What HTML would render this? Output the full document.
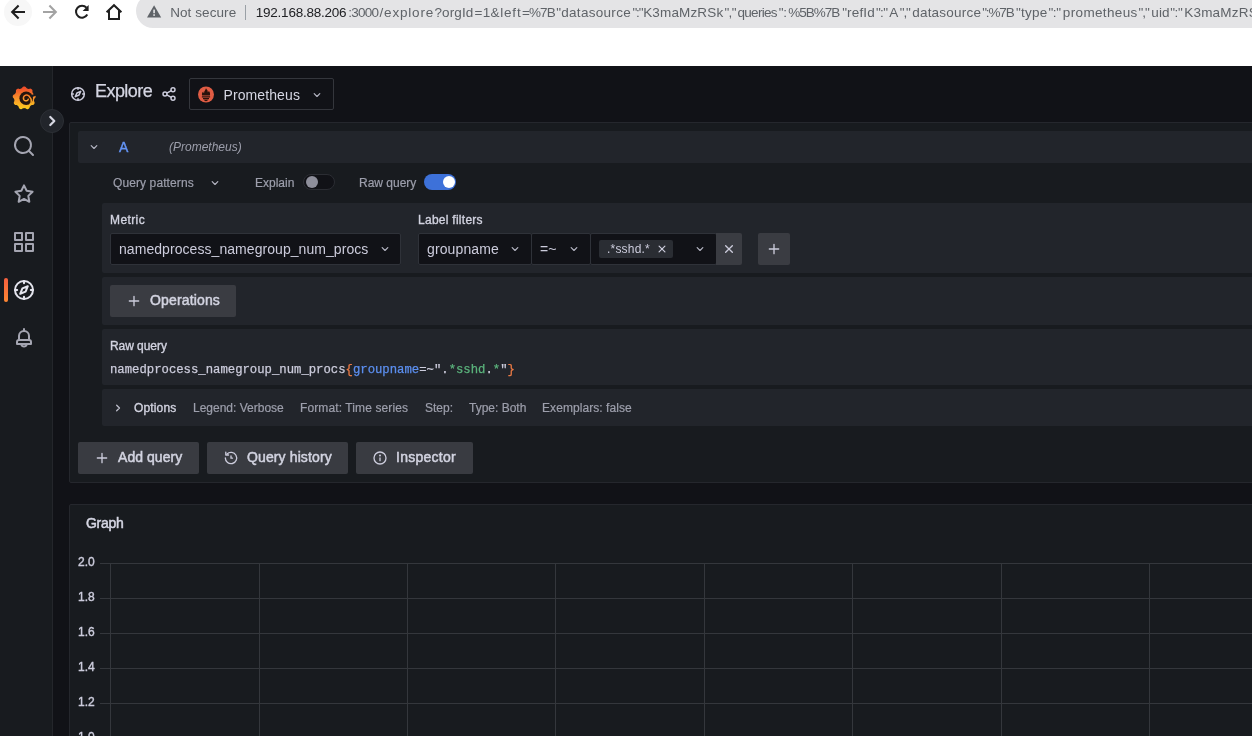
<!DOCTYPE html>
<html lang="en">
<head>
<meta charset="utf-8">
<title>Explore - Grafana</title>
<style>
*{box-sizing:border-box}
html,body{margin:0;padding:0}
body{width:1252px;height:736px;overflow:hidden;background:#fff;position:relative;font-family:"Liberation Sans",sans-serif;color:#ccccdc;font-size:14px}
.abs{position:absolute}
.t{position:absolute;white-space:nowrap;line-height:1}
svg{position:absolute;display:block;overflow:visible}
/* browser chrome */
#pill{left:136px;top:-6px;width:1140px;height:34px;background:#e4e4e6;border-radius:17px}
.url{font-size:13.5px;top:5.5px;color:#5f6368}
/* grafana */
#app{left:0;top:66px;width:1252px;height:670px;background:#111217}
#nav{left:0;top:66px;width:53px;height:670px;background:#181b1f;border-right:1px solid #24262b}
.panel{background:#181b1f;border:1px solid #25272d;border-radius:2px}
.sec{background:#22252b;border-radius:2px}
.inp{background:#111217;border:1px solid #2f3239;border-radius:2px}
.btn{background:#393b41;border-radius:2px}
.lbl{font-size:12px;color:#d2d3e0;-webkit-text-stroke:.35px #d2d3e0}
.sm{font-size:12px;color:#9d9fac;-webkit-text-stroke:.2px #9d9fac}
.bt{font-size:14px;color:#d2d3e0;-webkit-text-stroke:.5px #d2d3e0}
.ax{font-size:12px;color:#ccccdc;-webkit-text-stroke:.4px #ccccdc}
.code{font-family:"Liberation Mono",monospace;font-size:12.28px;color:#ccccdc;-webkit-text-stroke:.25px}
</style>
</head>
<body>
<div id="root" style="position:absolute;left:0;top:0;width:1252px;height:736px;will-change:transform;transform:translateZ(0)">
<!-- ============ browser chrome ============ -->
<div class="abs" id="pill"></div>
<div id="chrome-icons">
<div class="abs" style="left:4px;top:-2px;width:28px;height:28px;border-radius:14px;background:#f7f7f7"></div>
<!-- back -->
<svg style="left:10px;top:4px" width="16" height="16" viewBox="0 0 16 16" fill="none" stroke="#1f1f1f" stroke-width="2.100" stroke-linecap="butt" stroke-linejoin="miter"><path d="M15 8H2.6M8.6 1.6L2.2 8l6.4 6.4"/></svg>
<!-- forward -->
<svg style="left:42px;top:4px" width="16" height="16" viewBox="0 0 16 16" fill="none" stroke="#a3a3a3" stroke-width="2.100"><path d="M1 8h12.4M7.4 1.6L13.8 8l-6.400 6.400"/></svg>
<!-- reload -->
<svg style="left:74px;top:4px" width="16" height="16" viewBox="0 0 16 16" fill="none" stroke="#1f1f1f" stroke-width="2"><path d="M13.300 10.600A6 6 0 1 1 12.500 3.700"/><path d="M14.600 1v6h-6z" fill="#1f1f1f" stroke="none"/></svg>
<!-- home -->
<svg style="left:105px;top:3px" width="18" height="18" viewBox="0 0 18 18" fill="none" stroke="#1f1f1f" stroke-width="2" stroke-linejoin="miter"><path d="M1.600 9.300L9 2.200l7.400 7.100M4 7.600V16h10V7.600"/></svg>
<!-- warning -->
<svg style="left:147px;top:5.300px" width="14.200" height="12.600" viewBox="0 0 14 12"><path d="M7 0L14 12H0z" fill="#5f6368"/><rect x="6.200" y="4.300" width="1.600" height="3.600" fill="#e4e4e6"/><rect x="6.200" y="8.900" width="1.600" height="1.600" fill="#e4e4e6"/></svg>
<div class="abs" style="left:245px;top:5px;width:1px;height:15px;background:#9aa0a6"></div>
</div>
<div id="urltext">
<span class="t url" style="left:170.2px;letter-spacing:0.08px">Not secure</span>
<span class="t url" style="left:255.8px;letter-spacing:-0.24px;color:#202124">192.168.88.206</span>
<span class="t url" style="left:348.2px;letter-spacing:-0.76px">:3000</span>
<span class="t url" style="left:379.5px;letter-spacing:0.82px">/explore</span>
<span class="t url" style="left:434.5px;letter-spacing:0.09px">?orgId</span>
<span class="t url" style="left:474.5px;letter-spacing:0.30px">=1&amp;</span>
<span class="t url" style="left:500.2px;letter-spacing:0.83px">left</span>
<span class="t url" style="left:522.0px;letter-spacing:-0.89px">=%7B</span>
<span class="t url" style="left:556.2px;letter-spacing:0.29px">"datasource</span>
<span class="t url" style="left:632.5px;letter-spacing:-1.20px">":"</span>
<span class="t url" style="left:643.2px;letter-spacing:0.15px">K3maMzRSk</span>
<span class="t url" style="left:724.5px;letter-spacing:-0.67px">","</span>
<span class="t url" style="left:737.5px;letter-spacing:-0.71px">queries</span>
<span class="t url" style="left:778.8px;letter-spacing:-0.30px">":</span>
<span class="t url" style="left:788.2px;letter-spacing:-1.01px">%5B%7B</span>
<span class="t url" style="left:842.2px;letter-spacing:0.14px">"refId</span>
<span class="t url" style="left:876.0px;letter-spacing:-0.67px">":"</span>
<span class="t url" style="left:889.2px">A</span>
<span class="t url" style="left:899.8px;letter-spacing:-1.20px">","</span>
<span class="t url" style="left:912.2px;letter-spacing:0.22px">datasource</span>
<span class="t url" style="left:982.2px;letter-spacing:-1.20px">":</span>
<span class="t url" style="left:988.5px;letter-spacing:-1.14px">%7B</span>
<span class="t url" style="left:1016.0px;letter-spacing:0.23px">"type</span>
<span class="t url" style="left:1048.5px;letter-spacing:-0.42px">":"</span>
<span class="t url" style="left:1062.8px;letter-spacing:0.36px">prometheus</span>
<span class="t url" style="left:1138.5px;letter-spacing:-0.97px">","</span>
<span class="t url" style="left:1151.2px;letter-spacing:0.19px">uid</span>
<span class="t url" style="left:1170.3px;letter-spacing:-0.47px">":"</span>
<span class="t url" style="left:1184.2px;letter-spacing:0.22px">K3maMzRSk"</span>
</div>

<!-- ============ grafana app ============ -->
<div class="abs" id="app"></div>
<div class="abs" id="nav"></div>
<div id="navicons">
<!-- grafana logo -->
<svg style="left:12px;top:86px" width="24" height="24" viewBox="0 0 24 24">
<defs><linearGradient id="gl" gradientUnits="userSpaceOnUse" x1="0" y1="24" x2="0" y2="0"><stop offset="0" stop-color="#fbd21c"/><stop offset=".45" stop-color="#f8982a"/><stop offset=".9" stop-color="#ef4f2a"/></linearGradient></defs>
<path fill="url(#gl)" d="M12.20 0.50 L12.70 0.55 L13.20 0.69 L13.67 0.95 L14.08 1.46 L14.44 1.99 L14.83 2.30 L15.22 2.53 L15.62 2.70 L16.04 2.83 L16.49 2.90 L16.98 2.92 L17.60 2.75 L18.24 2.61 L18.77 2.72 L19.24 2.93 L19.66 3.21 L20.01 3.57 L20.30 4.00 L20.49 4.50 L20.47 5.16 L20.41 5.80 L20.51 6.28 L20.67 6.71 L20.86 7.10 L21.10 7.47 L21.40 7.81 L21.76 8.14 L22.35 8.41 L22.93 8.72 L23.26 9.14 L23.49 9.60 L23.62 10.09 L23.66 10.59 L23.61 11.10 L23.44 11.61 L23.00 12.10 L22.54 12.55 L22.31 12.98 L22.15 13.41 L22.05 13.84 L22.00 14.27 L22.00 14.73 L22.07 15.21 L22.35 15.79 L22.59 16.41 L22.58 16.94 L22.46 17.44 L22.25 17.90 L21.95 18.31 L21.58 18.67 L21.12 18.95 L20.47 19.04 L19.83 19.09 L19.38 19.28 L18.98 19.50 L18.63 19.76 L18.31 20.06 L18.02 20.41 L17.76 20.83 L17.60 21.45 L17.39 22.08 L17.04 22.48 L16.62 22.78 L16.17 23.00 L15.68 23.13 L15.16 23.16 L14.63 23.08 L14.08 22.74 L13.55 22.36 L13.08 22.21 L12.64 22.13 L12.20 22.10 L11.76 22.13 L11.32 22.21 L10.85 22.36 L10.32 22.74 L9.77 23.08 L9.24 23.16 L8.72 23.13 L8.23 23.00 L7.78 22.78 L7.36 22.48 L7.01 22.08 L6.80 21.45 L6.64 20.83 L6.38 20.41 L6.09 20.06 L5.77 19.76 L5.42 19.50 L5.02 19.28 L4.57 19.09 L3.93 19.04 L3.28 18.95 L2.82 18.67 L2.45 18.31 L2.15 17.90 L1.94 17.44 L1.82 16.94 L1.81 16.41 L2.05 15.79 L2.33 15.21 L2.40 14.73 L2.40 14.27 L2.35 13.84 L2.25 13.41 L2.09 12.98 L1.86 12.55 L1.40 12.10 L0.96 11.61 L0.79 11.10 L0.74 10.59 L0.78 10.09 L0.91 9.60 L1.14 9.14 L1.47 8.72 L2.05 8.41 L2.64 8.14 L3.00 7.81 L3.30 7.47 L3.54 7.10 L3.73 6.71 L3.89 6.28 L3.99 5.80 L3.93 5.16 L3.91 4.50 L4.10 4.00 L4.39 3.57 L4.74 3.21 L5.16 2.93 L5.63 2.72 L6.16 2.61 L6.80 2.75 L7.42 2.92 L7.91 2.90 L8.36 2.83 L8.78 2.70 L9.18 2.53 L9.57 2.30 L9.96 1.99 L10.32 1.46 L10.73 0.95 L11.20 0.69 L11.70 0.55Z"/>
<circle cx="14.200" cy="12.300" r="6.800" fill="#24150e"/>
<path d="M18.500 10.600L24 8.400" stroke="#181b1f" stroke-width="2.200" fill="none"/>
<path d="M18.20 17.97 L18.44 17.60 L18.64 17.22 L18.82 16.84 L18.96 16.45 L19.08 16.07 L19.17 15.68 L19.22 15.30 L19.25 14.92 L19.26 14.56 L19.23 14.20 L19.19 13.85 L19.11 13.51 L19.02 13.19 L18.90 12.88 L18.77 12.60 L18.62 12.32 L18.45 12.07 L18.27 11.84 L18.08 11.63 L17.87 11.44 L17.87 11.44 L17.72 11.06 L17.52 10.70 L17.28 10.37 L17.01 10.08 L16.71 9.81 L16.39 9.58 L16.05 9.40 L15.69 9.25 L15.32 9.14 L14.94 9.08 L14.57 9.06 L14.20 9.09 L13.83 9.15 L13.48 9.25 L13.15 9.39 L12.83 9.57 L12.54 9.78 L12.28 10.01 L12.05 10.28 L11.86 10.56 L11.69 10.86 L11.57 11.17 L11.48 11.49 L11.43 11.82 L11.41 12.15 L11.43 12.47 L11.49 12.78 L11.58 13.09 L11.71 13.38 L11.86 13.64 L12.04 13.89 L12.24 14.11 L12.47 14.31 L12.71 14.48 L12.97 14.61 L13.24 14.72 L13.51 14.79 L13.79 14.83 L14.07 14.84 L14.34 14.82 L14.61 14.77 L14.86 14.69 L15.10 14.58 L15.33 14.45 L15.53 14.30 L15.71 14.12 L15.87 13.93 L16.01 13.73 L16.12 13.51 L16.20 13.29" fill="none" stroke="url(#gl)" stroke-width="1.500" stroke-linecap="round" stroke-linejoin="round"/>
</svg>
<!-- toggle -->
<div class="abs" style="left:40px;top:109px;width:24px;height:24px;border-radius:12px;background:#22252b;border:1px solid #2c2f35"></div>
<svg style="left:40px;top:109px" width="24" height="24" viewBox="0 0 24 24" fill="none" stroke="#d8d9e4" stroke-width="2.200" stroke-linecap="round" stroke-linejoin="round"><path d="M10.300 8l4 4-4 4"/></svg>
<!-- search -->
<svg style="left:12px;top:134px" width="24" height="24" viewBox="0 0 24 24" fill="#a4a5b1"><path d="M21.710,20.290,18,16.610A9,9,0,1,0,16.610,18l3.680,3.680a1,1,0,0,0,1.420,0A1,1,0,0,0,21.710,20.290ZM11,18a7,7,0,1,1,7-7A7,7,0,0,1,11,18Z"/></svg>
<!-- star -->
<svg style="left:12px;top:182px" width="24" height="24" viewBox="0 0 24 24" fill="none" stroke="#a4a5b1" stroke-width="2" stroke-linejoin="round"><path d="M12 3.400l2.650 5.400 5.950 .860-4.300 4.200 1.020 5.920L12 16.980 6.680 19.780l1.020-5.920-4.300-4.200 5.950-.860z"/></svg>
<!-- apps -->
<svg style="left:12px;top:230px" width="24" height="24" viewBox="0 0 24 24" fill="none" stroke="#a4a5b1" stroke-width="2" stroke-linejoin="round"><rect x="3" y="3" width="7" height="7"/><rect x="14" y="3" width="7" height="7"/><rect x="3" y="14" width="7" height="7"/><rect x="14" y="14" width="7" height="7"/></svg>
<!-- compass active -->
<div class="abs" style="left:4px;top:278px;width:4px;height:24px;border-radius:2px;background:linear-gradient(#f55f3e,#ff8833)"></div>
<svg style="left:12px;top:278px" width="24" height="24" viewBox="0 0 24 24" fill="none" stroke="#e4e5ee" stroke-width="2" stroke-linecap="round" stroke-linejoin="round"><circle cx="12" cy="12" r="9"/><path d="M12 3v2.200M12 18.800V21M3 12h2.200M18.800 12H21"/><path d="M15.800 8.200l-2.200 5.400-5.400 2.200 2.200-5.400z"/></svg>
<!-- bell -->
<svg style="left:12px;top:326px" width="24" height="24" viewBox="0 0 24 24" fill="none" stroke="#a4a5b1" stroke-width="2" stroke-linecap="round" stroke-linejoin="round"><path d="M7 14V10a5 5 0 0 1 10 0v4M12 5V3M7 14h10a2 2 0 0 1 2 2v2H5v-2a2 2 0 0 1 2-2z"/><path d="M9.300 18.500a2.800 2.800 0 0 0 5.400 0"/></svg>
</div>

<div id="toolbar">
<svg style="left:70px;top:86px" width="16" height="16" viewBox="0 0 24 24" fill="none" stroke="#ccccdc" stroke-width="2.300" stroke-linecap="round" stroke-linejoin="round"><circle cx="12" cy="12" r="9.500"/><path d="M12 2.500v2.500M12 19v2.500M2.500 12H5M19 12h2.500"/><path d="M16 8l-2.400 5.600L8 16l2.400-5.600z"/></svg>
<span class="t" style="left:95px;top:82px;font-size:18px;letter-spacing:-.55px;color:#d5d6e3;-webkit-text-stroke:.25px #d5d6e3">Explore</span>
<svg style="left:161px;top:86px" width="16" height="16" viewBox="0 0 24 24" fill="none" stroke="#ccccdc" stroke-width="2.200"><circle cx="18" cy="5.500" r="3"/><circle cx="6" cy="12" r="3"/><circle cx="18" cy="18.500" r="3"/><path d="M8.600 10.600l6.800-3.700M8.600 13.400l6.800 3.700"/></svg>
<div class="abs" style="left:189px;top:78px;width:145px;height:32px;border:1px solid #34363c;border-radius:2px;background:#111217"></div>
<svg style="left:198px;top:86px" width="16" height="17" viewBox="0 0 16 17"><circle cx="8" cy="8.500" r="8" fill="#e05c44"/><path fill="#2a120c" d="M8 2.200C8.600 3.600 10.200 4.400 9.700 6.300C10.400 6 10.700 5.300 10.700 4.700C12 6 12.400 7.700 11.900 9.400H4.100C3.600 7.800 4.200 6.400 5.200 5.500C5.200 6.300 5.600 6.900 6.100 7.100C5.900 5 7.500 4.200 8 2.200ZM3.900 10.200H12.100V11.500H3.900ZM5 12.100H11V13.200H5ZM6 13.800H10C9.800 14.700 9 15.200 8 15.200C7 15.200 6.200 14.700 6 13.800Z"/></svg>
<span class="t" style="left:223.500px;top:87.500px;font-size:14px;letter-spacing:.1px;color:#d5d6e3">Prometheus</span>
<svg style="left:309px;top:87px" width="16" height="16" viewBox="0 0 24 24" fill="none" stroke="#b4b5c2" stroke-width="1.800" stroke-linecap="round" stroke-linejoin="round"><path d="M7.800 10l4.200 4.200 4.200-4.200"/></svg>
</div>

<!-- query panel -->
<div class="abs panel" style="left:69px;top:122px;width:1200px;height:361px"></div>
<div id="query">
<!-- row header -->
<div class="abs sec" style="left:78px;top:131px;width:1190px;height:32px"></div>
<svg style="left:86px;top:139px" width="16" height="16" viewBox="0 0 24 24" fill="none" stroke="#b4b5c2" stroke-width="1.800" stroke-linecap="round" stroke-linejoin="round"><path d="M7.800 10l4.200 4.200 4.200-4.200"/></svg>
<span class="t" style="left:119px;top:140px;font-size:14px;letter-spacing:0;color:#6494f5;-webkit-text-stroke:.4px #6494f5">A</span>
<span class="t" style="left:169px;top:141px;font-size:12px;font-style:italic;color:#9d9fac">(Prometheus)</span>
<!-- options row -->
<span class="t sm" style="left:113px;top:177px;letter-spacing:0.1px">Query patterns</span>
<svg style="left:207px;top:175px" width="16" height="16" viewBox="0 0 24 24" fill="none" stroke="#b4b5c2" stroke-width="1.800" stroke-linecap="round" stroke-linejoin="round"><path d="M7.800 10l4.200 4.200 4.200-4.200"/></svg>
<span class="t sm" style="left:255px;top:177px">Explain</span>
<div class="abs" style="left:303px;top:174px;width:32px;height:16px;border-radius:8px;background:#111217;border:1px solid #2b2d33"></div>
<div class="abs" style="left:306px;top:176px;width:12px;height:12px;border-radius:6px;background:#8e8f9b"></div>
<span class="t sm" style="left:359px;top:177px">Raw query</span>
<div class="abs" style="left:424px;top:174px;width:32px;height:16px;border-radius:8px;background:#3d71d9"></div>
<div class="abs" style="left:443px;top:176px;width:12px;height:12px;border-radius:6px;background:#fff"></div>
<!-- metric / label filters -->
<div class="abs sec" style="left:102px;top:203px;width:1170px;height:70px"></div>
<span class="t lbl" style="left:110px;top:214px;letter-spacing:0.4px">Metric</span>
<div class="abs inp" style="left:110px;top:233px;width:291px;height:32px"></div>
<span class="t" style="left:119px;top:242px;font-size:14px;letter-spacing:0.06px">namedprocess_namegroup_num_procs</span>
<svg style="left:377px;top:241px" width="16" height="16" viewBox="0 0 24 24" fill="none" stroke="#b4b5c2" stroke-width="1.800" stroke-linecap="round" stroke-linejoin="round"><path d="M7.800 10l4.200 4.200 4.200-4.200"/></svg>
<span class="t lbl" style="left:418px;top:214px;letter-spacing:0.27px">Label filters</span>
<div class="abs inp" style="left:418px;top:233px;width:114px;height:32px"></div>
<span class="t" style="left:427px;top:242px;font-size:14px;letter-spacing:0.12px">groupname</span>
<svg style="left:507px;top:241px" width="16" height="16" viewBox="0 0 24 24" fill="none" stroke="#b4b5c2" stroke-width="1.800" stroke-linecap="round" stroke-linejoin="round"><path d="M7.800 10l4.200 4.200 4.200-4.200"/></svg>
<div class="abs inp" style="left:531px;top:233px;width:60px;height:32px"></div>
<span class="t" style="left:540px;top:242px;font-size:14px">=~</span>
<svg style="left:566px;top:241px" width="16" height="16" viewBox="0 0 24 24" fill="none" stroke="#b4b5c2" stroke-width="1.800" stroke-linecap="round" stroke-linejoin="round"><path d="M7.800 10l4.200 4.200 4.200-4.200"/></svg>
<div class="abs inp" style="left:590px;top:233px;width:127px;height:32px"></div>
<div class="abs" style="left:599px;top:240px;width:74px;height:18px;border-radius:2px;background:#2a2d33"></div>
<span class="t" style="left:607px;top:243px;font-size:12px;letter-spacing:0.2px">.*sshd.*</span>
<svg style="left:655px;top:242px" width="14" height="14" viewBox="0 0 24 24" fill="none" stroke="#ccccdc" stroke-width="2" stroke-linecap="round"><path d="M7 7l10 10M17 7L7 17"/></svg>
<svg style="left:692px;top:241px" width="16" height="16" viewBox="0 0 24 24" fill="none" stroke="#b4b5c2" stroke-width="1.800" stroke-linecap="round" stroke-linejoin="round"><path d="M7.800 10l4.200 4.200 4.200-4.200"/></svg>
<div class="abs btn" style="left:716px;top:233px;width:26px;height:32px;border-radius:0 2px 2px 0;background:#3a3c42"></div>
<svg style="left:721px;top:241px" width="16" height="16" viewBox="0 0 24 24" fill="none" stroke="#ccccdc" stroke-width="2" stroke-linecap="round"><path d="M7 7l10 10M17 7L7 17"/></svg>
<div class="abs btn" style="left:758px;top:233px;width:32px;height:32px;background:#3a3c42"></div>
<svg style="left:766px;top:241px" width="16" height="16" viewBox="0 0 24 24" fill="none" stroke="#ccccdc" stroke-width="2" stroke-linecap="round"><path d="M12 5v14M5 12h14"/></svg>
<!-- operations -->
<div class="abs sec" style="left:102px;top:277px;width:1170px;height:48px"></div>
<div class="abs btn" style="left:110px;top:285px;width:126px;height:32px;background:#3a3c42"></div>
<svg style="left:126px;top:293px" width="16" height="16" viewBox="0 0 24 24" fill="none" stroke="#ccccdc" stroke-width="2" stroke-linecap="round"><path d="M12 5v14M5 12h14"/></svg>
<span class="t bt" style="left:150px;top:293px;letter-spacing:0.15px">Operations</span>
<!-- raw query -->
<div class="abs sec" style="left:102px;top:329px;width:1170px;height:56px"></div>
<span class="t lbl" style="left:110px;top:340px;letter-spacing:-.06px">Raw query</span>
<span class="t code" style="left:110px;top:364px">namedprocess_namegroup_num_procs<span style="color:#ea7a45">{</span><span style="color:#5c8ff0">groupname</span>=~".<span style="color:#5bb37c">*sshd</span>.<span style="color:#5bb37c">*</span>"<span style="color:#ea7a45">}</span></span>
<!-- options -->
<div class="abs sec" style="left:102px;top:389px;width:1170px;height:37px"></div>
<svg style="left:110px;top:400px" width="16" height="16" viewBox="0 0 24 24" fill="none" stroke="#b9bac7" stroke-width="2" stroke-linecap="round" stroke-linejoin="round"><path d="M10 7.800l4.200 4.200-4.200 4.200"/></svg>
<span class="t lbl" style="left:134px;top:402px;letter-spacing:0.15px">Options</span>
<span class="t sm" style="left:193px;top:402px">Legend: Verbose</span>
<span class="t sm" style="left:300px;top:402px;letter-spacing:0.11px">Format: Time series</span>
<span class="t sm" style="left:425px;top:402px">Step:</span>
<span class="t sm" style="left:469px;top:402px">Type: Both</span>
<span class="t sm" style="left:542px;top:402px;letter-spacing:0.07px">Exemplars: false</span>
<!-- buttons -->
<div class="abs btn" style="left:78px;top:442px;width:121px;height:32px"></div>
<svg style="left:94px;top:450px" width="16" height="16" viewBox="0 0 24 24" fill="none" stroke="#ccccdc" stroke-width="2" stroke-linecap="round"><path d="M12 5v14M5 12h14"/></svg>
<span class="t bt" style="left:118px;top:450px;letter-spacing:0.05px">Add query</span>
<div class="abs btn" style="left:207px;top:442px;width:141px;height:32px"></div>
<svg style="left:223px;top:450px" width="16" height="16" viewBox="0 0 24 24" fill="none" stroke="#ccccdc" stroke-width="2" stroke-linecap="round" stroke-linejoin="round"><path d="M3.500 12a8.500 8.500 0 1 0 2.600-6.100"/><path d="M4.200 3.400v4.100h4.100"/><path d="M12 9v3.200h2.200"/></svg>
<span class="t bt" style="left:247px;top:450px;letter-spacing:0.12px">Query history</span>
<div class="abs btn" style="left:356px;top:442px;width:117px;height:32px"></div>
<svg style="left:372px;top:450px" width="16" height="16" viewBox="0 0 24 24" fill="none" stroke="#ccccdc" stroke-width="2" stroke-linecap="round"><circle cx="12" cy="12" r="9"/><path d="M12 12v4"/><circle cx="12" cy="8.300" r=".6" fill="#ccccdc"/></svg>
<span class="t bt" style="left:396px;top:450px;letter-spacing:0.25px">Inspector</span>
</div>

<!-- graph panel -->
<div class="abs panel" style="left:69px;top:504px;width:1200px;height:300px"></div>
<div id="graph">
<span class="t" style="left:86px;top:516px;font-size:14px;letter-spacing:-.3px;color:#d5d6e3;-webkit-text-stroke:.5px #d5d6e3">Graph</span>
<svg style="left:0;top:0" width="1252" height="736" viewBox="0 0 1252 736" shape-rendering="crispEdges" stroke="#34373c" stroke-width="1">
<path d="M100 563.500H1252M100 598.500H1252M100 633.500H1252M100 668.500H1252M100 703.500H1252"/>
<path d="M110.500 563V736M259.500 563V736M407.500 563V736M555.500 563V736M704.500 563V736M852.500 563V736M1001.500 563V736M1149.500 563V736"/>
</svg>
<span class="t ax" style="left:78px;top:556px">2.0</span>
<span class="t ax" style="left:78px;top:591px">1.8</span>
<span class="t ax" style="left:78px;top:626px">1.6</span>
<span class="t ax" style="left:78px;top:661px">1.4</span>
<span class="t ax" style="left:78px;top:696px">1.2</span>
<span class="t ax" style="left:78px;top:731px">1.0</span>
</div>
</div>
</body>
</html>
